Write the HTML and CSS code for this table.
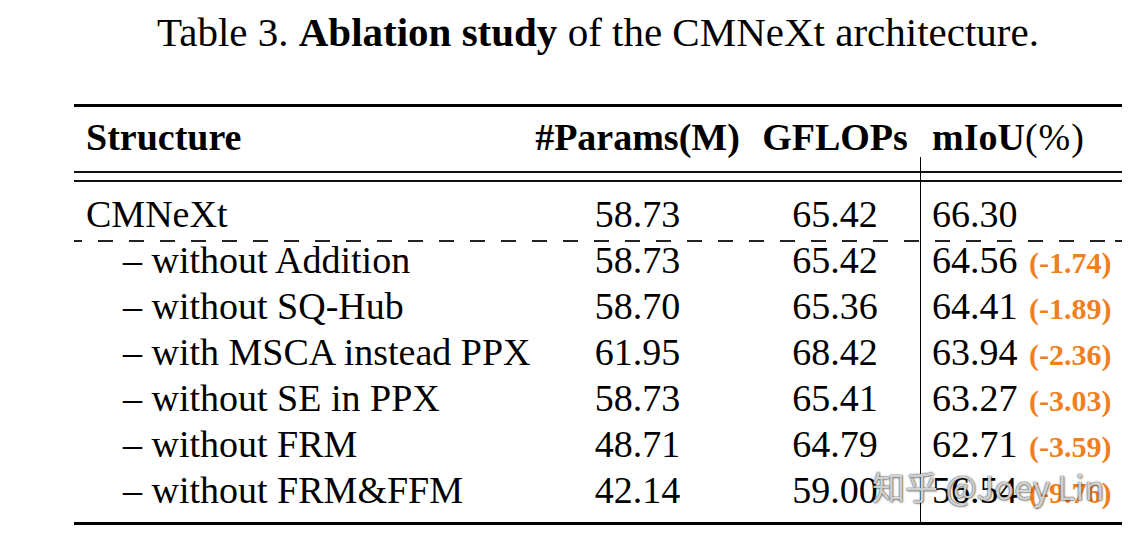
FILE: index.html
```html
<!DOCTYPE html>
<html lang="en">
<head>
<meta charset="utf-8">
<title>Table 3</title>
<link rel="stylesheet" href="styles.css">
</head>
<body>
<div class="page">
  <div class="wrap">
    <p class="caption">Table 3. <b>Ablation study</b> of the CMNeXt architecture.</p>
    <div class="table">
      <div class="row head">
        <div class="c1">Structure</div>
        <div class="c2">#Params(M)</div>
        <div class="c3">GFLOPs</div>
        <div class="c4">mIoU<span class="pct">(%)</span></div>
      </div>
      <div class="row dbl"><div></div><div></div><div></div><div class="c4"></div></div>
      <div class="row first">
        <div class="c1">CMNeXt</div>
        <div class="c2">58.73</div>
        <div class="c3">65.42</div>
        <div class="c4">66.30</div>
      </div>
      <div class="dash"></div>
      <div class="row">
        <div class="c1 sub">– without Addition</div>
        <div class="c2">58.73</div>
        <div class="c3">65.42</div>
        <div class="c4">64.56 <span class="delta">(-1.74)</span></div>
      </div>
      <div class="row">
        <div class="c1 sub">– without SQ-Hub</div>
        <div class="c2">58.70</div>
        <div class="c3">65.36</div>
        <div class="c4">64.41 <span class="delta">(-1.89)</span></div>
      </div>
      <div class="row">
        <div class="c1 sub">– with MSCA instead PPX</div>
        <div class="c2">61.95</div>
        <div class="c3">68.42</div>
        <div class="c4">63.94 <span class="delta">(-2.36)</span></div>
      </div>
      <div class="row">
        <div class="c1 sub">– without SE in PPX</div>
        <div class="c2">58.73</div>
        <div class="c3">65.41</div>
        <div class="c4">63.27 <span class="delta">(-3.03)</span></div>
      </div>
      <div class="row">
        <div class="c1 sub">– without FRM</div>
        <div class="c2">48.71</div>
        <div class="c3">64.79</div>
        <div class="c4">62.71 <span class="delta">(-3.59)</span></div>
      </div>
      <div class="row last">
        <div class="c1 sub">– without FRM&amp;FFM</div>
        <div class="c2">42.14</div>
        <div class="c3">59.00</div>
        <div class="c4">56.54 <span class="delta">(-9.76)</span></div>
      </div>
    </div>
  </div>
  <div class="watermark">知乎 @Joey Lin</div>
</div>
</body>
</html>
```

FILE: styles.css
```css
html, body {
  margin: 0;
  padding: 0;
  background: #fff;
}

body {
  font-family: "Liberation Serif", "Times New Roman", serif;
  color: #000;
}

.page {
  position: relative;
  width: 1140px;
  height: 542px;
  overflow: hidden;
}

.wrap {
  margin-left: 74px;
  width: 1048px;
}

.caption {
  margin: 0;
  padding-top: 8px;
  text-align: center;
  font-size: 41px;
  line-height: 48px;
}

.table {
  margin-top: 48px;
  border-top: 3px solid #000;
  border-bottom: 3px solid #000;
}

.row {
  display: grid;
  grid-template-columns: 451px 225px 170px 202px;
  font-size: 38px;
  line-height: 46px;
  height: 46px;
  white-space: nowrap;
}

.c1 {
  padding-left: 12px;
}

.c1.sub {
  padding-left: 49px;
}

.c2,
.c3 {
  text-align: center;
}

.c4 {
  padding-left: 11px;
  border-left: 1px solid #000;
}

.head {
  height: auto;
  font-weight: bold;
}

.head > div {
  padding-top: 7px;
  padding-bottom: 11px;
}

.head .c4 {
  border-left: 0;
  padding-left: 12px;
  background: linear-gradient(#000, #000) 0 100% / 1px 14px no-repeat;
}

.pct {
  font-weight: normal;
  letter-spacing: 1px;
}

.dbl {
  height: 7px;
  border-top: 2px solid #111;
  border-bottom: 2px solid #111;
}

.first {
  height: 55px;
}

.first > div {
  padding-top: 9px;
}

.dash {
  height: 2px;
  margin: 3px 0 -5px;
  background: repeating-linear-gradient(to right, #222 0 15px, transparent 15px 31px);
  background-position: -7px 0;
}

.last {
  height: 55px;
}

.last > div {
  padding-bottom: 9px;
}

.delta {
  margin-left: 2px;
  font-size: 30px;
  line-height: 0;
  font-weight: bold;
  color: #ef7f1f;
}

.watermark {
  position: absolute;
  left: 872px;
  top: 466px;
  font-family: "Noto Sans CJK SC", "Noto Sans", sans-serif;
  font-size: 33px;
  line-height: 40px;
  white-space: nowrap;
  color: rgba(255, 255, 255, 0.78);
  text-shadow: 0 0 1px rgba(0, 0, 0, 0.7), 0 0 2px rgba(0, 0, 0, 0.45), 1px 1px 2px rgba(0, 0, 0, 0.3);
}
```
